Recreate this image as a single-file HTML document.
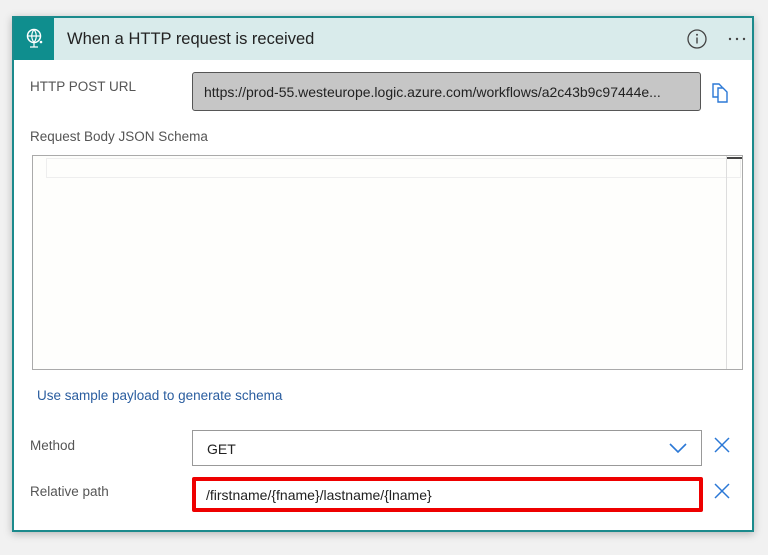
<!DOCTYPE html>
<html><head><meta charset="utf-8"><style>
*{box-sizing:border-box;margin:0;padding:0}
body{width:768px;height:555px;background:#f1f1f1;font-family:"Liberation Sans",sans-serif;position:relative;overflow:hidden}
.card{position:absolute;left:12px;top:16px;width:742px;height:516px;background:#fff;border:2px solid #1b8a8c;box-shadow:0 2px 8px rgba(0,0,0,.25)}
.hdr{position:absolute;left:0;top:0;width:738px;height:42px;background:#d9ebeb}
.ico{position:absolute;left:0;top:0;width:40px;height:42px;background:#0f8e8e}
.title{position:absolute;left:53px;top:12px;font-size:16.5px;color:#222}
.lbl{position:absolute;font-size:13.5px;color:#555}
.abs{position:absolute}
</style></head><body>
<div class="card">
 <div class="hdr">
  <div class="ico"><svg width="40" height="42" viewBox="0 0 40 42"><circle cx="20" cy="18" r="6.5" fill="none" stroke="#fff" stroke-width="1.5"/><path d="M13.5 18h13M20 11.5c-3 4-3 9 0 13M20 11.5c3 4 3 9 0 13M20 24.5v4M16 29h8" stroke="#fff" stroke-width="1.2" fill="none"/><circle cx="27" cy="24" r="1.3" fill="#fff"/></svg></div>
  <div class="title">When a HTTP request is received</div>
  <svg class="abs" style="left:672px;top:10px" width="22" height="22"><circle cx="11" cy="11" r="9" fill="none" stroke="#444" stroke-width="1.3"/><circle cx="11" cy="6.8" r="1" fill="#444"/><path d="M11 9.5v6" stroke="#444" stroke-width="1.4"/></svg>
  <svg class="abs" style="left:713px;top:18px" width="22" height="6"><circle cx="3" cy="3" r="1.2" fill="#444"/><circle cx="10" cy="3" r="1.2" fill="#444"/><circle cx="17" cy="3" r="1.2" fill="#444"/></svg>
 </div>
 <div class="lbl" style="left:16px;top:61px">HTTP POST URL</div>
 <div class="abs" style="left:178px;top:54px;width:509px;height:39px;background:#c6c6c6;border:1px solid #555;border-radius:3px;font-size:14px;color:#222;padding:11px 0 0 11px;white-space:nowrap">https://prod-55.westeurope.logic.azure.com/workflows/a2c43b9c97444e...</div>
 <svg class="abs" style="left:697px;top:64px" width="20" height="22"><path d="M2 2h6l3 3v10H2z" fill="none" stroke="#2b78d6" stroke-width="1.4"/><path d="M7 6h5l4 4v10H7z" fill="#fff" stroke="#2b78d6" stroke-width="1.4"/></svg>
 <div class="lbl" style="left:16px;top:111px">Request Body JSON Schema</div>
 <div class="abs" style="left:18px;top:137px;width:711px;height:215px;background:#fefefc;border:1px solid #aaa">
  <div class="abs" style="left:13px;top:2px;width:695px;height:20px;border:1px solid #eee"></div>
  <div class="abs" style="left:693px;top:0;width:1px;height:213px;background:#ddd"></div>
  <div class="abs" style="left:694px;top:1px;width:15px;height:2px;background:#444"></div>
 </div>
 <div class="abs" style="left:23px;top:370px;font-size:13.5px;color:#2a5d9f">Use sample payload to generate schema</div>
 <div class="lbl" style="left:16px;top:420px">Method</div>
 <div class="abs" style="left:178px;top:412px;width:510px;height:36px;border:1px solid #999;font-size:14px;color:#222;padding:10px 0 0 14px">GET</div>
 <svg class="abs" style="left:654px;top:423px" width="20" height="14"><path d="M2 3l8 8 8-8" fill="none" stroke="#2b78d6" stroke-width="1.6"/></svg>
 <svg class="abs" style="left:699px;top:418px" width="18" height="18"><path d="M2 2l14 14M16 2L2 16" stroke="#2b78d6" stroke-width="1.5"/></svg>
 <div class="lbl" style="left:16px;top:466px">Relative path</div>
 <div class="abs" style="left:178px;top:459px;width:511px;height:35px;border:4px solid #ee0000;border-radius:2px;font-size:14px;color:#222;padding:6px 0 0 10px">/firstname/{fname}/lastname/{lname}</div>
 <svg class="abs" style="left:699px;top:464px" width="18" height="18"><path d="M2 2l14 14M16 2L2 16" stroke="#2b78d6" stroke-width="1.5"/></svg>
</div>
</body></html>
